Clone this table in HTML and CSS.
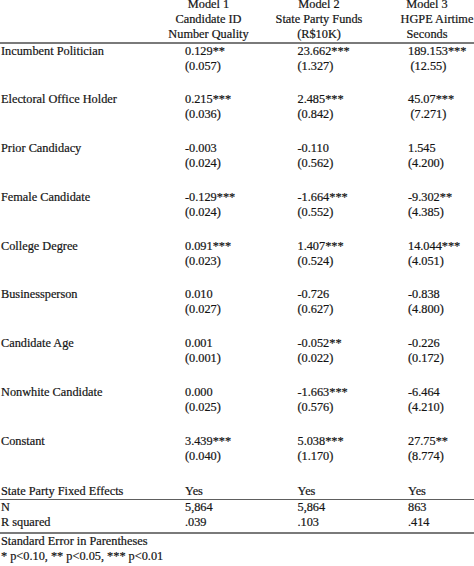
FILE: index.html
```html
<!DOCTYPE html>
<html>
<head>
<meta charset="utf-8">
<link rel="stylesheet" href="styles.css">
</head>
<body>
<div class="tbl">
  <div class="head">
    <div class="sp"></div>
    <div class="hc">Model 1<br>Candidate ID<br>Number Quality</div>
    <div class="hc">Model 2<br>State Party Funds<br>(R$10K)</div>
    <div class="hc">Model 3<br><span class="shift">HGPE Airtime</span><br>Seconds</div>
  </div>
  <div class="rule rule-top"></div>

  <div class="row blk"><div class="lab">Incumbent Politician</div><div>0.129**<br>(0.057)</div><div>23.662***<br>(1.327)</div><div>189.153***<br>&#8201;(12.55)</div></div>
  <div class="row blk"><div class="lab">Electoral Office Holder</div><div>0.215***<br>(0.036)</div><div>2.485***<br>(0.842)</div><div>45.07***<br>&#8201;(7.271)</div></div>
  <div class="row blk"><div class="lab">Prior Candidacy</div><div>-0.003<br>(0.024)</div><div>-0.110<br>(0.562)</div><div>1.545<br>(4.200)</div></div>
  <div class="row blk"><div class="lab">Female Candidate</div><div>-0.129***<br>(0.024)</div><div>-1.664***<br>(0.552)</div><div>-9.302**<br>(4.385)</div></div>
  <div class="row blk"><div class="lab">College Degree</div><div>0.091***<br>(0.023)</div><div>1.407***<br>(0.524)</div><div>14.044***<br>(4.051)</div></div>
  <div class="row blk"><div class="lab">Businessperson</div><div>0.010<br>(0.027)</div><div>-0.726<br>(0.627)</div><div>-0.838<br>(4.800)</div></div>
  <div class="row blk"><div class="lab">Candidate Age</div><div>0.001<br>(0.001)</div><div>-0.052**<br>(0.022)</div><div>-0.226<br>(0.172)</div></div>
  <div class="row blk"><div class="lab">Nonwhite Candidate</div><div>0.000<br>(0.025)</div><div>-1.663***<br>(0.576)</div><div>-6.464<br>(4.210)</div></div>
  <div class="row blk blk-last"><div class="lab">Constant</div><div>3.439***<br>(0.040)</div><div>5.038***<br>(1.170)</div><div>27.75**<br>(8.774)</div></div>

  <div class="row"><div class="lab">State Party Fixed Effects</div><div>Yes</div><div>Yes</div><div>Yes</div></div>
  <div class="rule rule-mid"></div>
  <div class="row"><div class="lab">N</div><div>5,864</div><div>5,864</div><div>863</div></div>
  <div class="row"><div class="lab">R squared</div><div>.039</div><div>.103</div><div>.414</div></div>
  <div class="rule rule-bot"></div>
  <div class="note">Standard Error in Parentheses</div>
  <div class="note">* p&lt;0.10, ** p&lt;0.05, *** p&lt;0.01</div>
</div>
</body>
</html>
```

FILE: styles.css
```css
html, body {
  margin: 0;
  padding: 0;
  background: #ffffff;
}
body {
  width: 474px;
  height: 566px;
  overflow: hidden;
  font-family: "Liberation Serif", "Times New Roman", serif;
  font-size: 12.3px;
  line-height: 15px;
  color: #141414;
  -webkit-text-stroke: 0.2px #141414;
}
.tbl {
  margin-top: -3.5px;
  white-space: nowrap;
}
.head {
  display: grid;
  grid-template-columns: 150px 117px 104px 112px;
  width: 483px;
}
.hc {
  text-align: center;
}
.shift {
  padding-left: 20px;
}
.rule {
  width: 474px;
}
.rule-top {
  height: 2px;
  background: #7a7a7a;
}
.rule-mid {
  height: 1.5px;
  background: #5e5e5e;
}
.rule-bot {
  height: 2px;
  margin-top: 1.5px;
  background: #7a7a7a;
}
.row {
  display: grid;
  grid-template-columns: 185px 112.5px 110.5px 1fr;
}
.lab {
  padding-left: 1px;
}
.blk {
  padding-bottom: 18.8px;
}
.blk-last {
  padding-bottom: 20px;
}
.note {
  padding-left: 1px;
}
```
